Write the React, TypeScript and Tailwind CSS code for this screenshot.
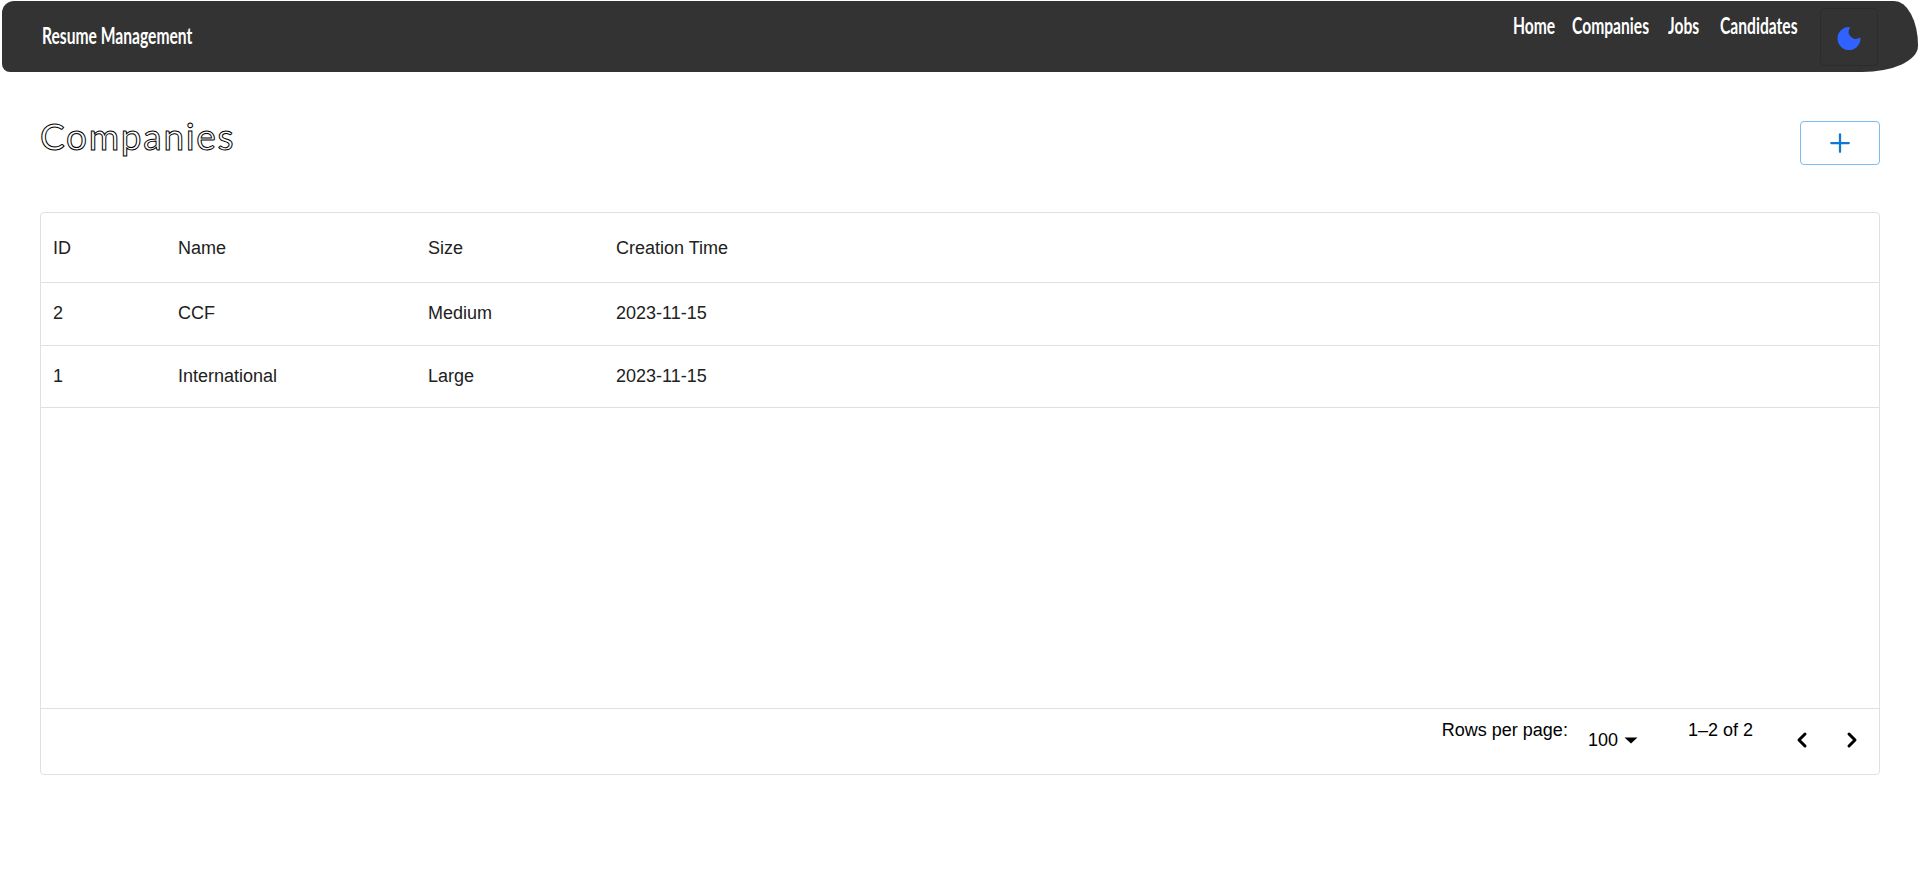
import { ChevronLeft, ChevronRight, Plus } from "lucide-react";

const rows = [
  { id: 2, name: "CCF", size: "Medium", created: "2023-11-15" },
  { id: 1, name: "International", size: "Large", created: "2023-11-15" },
];

const links = [
  { label: "Home", w: "w-[39px]" },
  { label: "Companies", w: "w-[76px]" },
  { label: "Jobs", w: "w-[32px]" },
  { label: "Candidates", w: "w-[80px]" },
];

function Cell({ w, children }: { w?: string; children: React.ReactNode }) {
  return <div className={`${w ?? "flex-1"} px-[12px] truncate`}>{children}</div>;
}

// no condensed font is installed, so the nav text is squeezed to the reference's width
function NavText({ w, children }: { w: string; children: React.ReactNode }) {
  return (
    <a className={`${w} block text-[22px] leading-[24px]`}>
      <span className="inline-block origin-left scale-x-[0.71] whitespace-nowrap">{children}</span>
    </a>
  );
}

export default function App() {
  return (
    <div className="h-[888px] w-full overflow-hidden bg-white font-['Liberation_Sans',sans-serif] text-black">
      <nav className="mt-px ml-[2px] flex h-[71px] justify-between bg-[#333333] pl-[40px] pr-[40px] rounded-tl-[12px] rounded-bl-[8px] rounded-tr-[24px_44px] rounded-br-[56px_26px] font-['Lato',sans-serif] font-bold text-white">
        <div className="mt-[23px]">
          <NavText w="w-[152px]">Resume Management</NavText>
        </div>
        <div className="flex items-start">
          <div className="mt-[13px] flex gap-[20px]">
            {links.map((l) => (
              <NavText key={l.label} w={l.w}>
                {l.label}
              </NavText>
            ))}
          </div>
          <button className="mt-[7px] ml-[20px] flex h-[58px] w-[58px] items-center justify-center rounded-[4px] border border-[#2c2c2c]">
            <svg width="24" height="24" viewBox="0 0 24 24" className="mt-px">
              <path
                fill="#2f62ff"
                d="M12 1a11.5 11.5 0 1 0 11.5 11.5c0-.6-.5-1-1-.8a7 7 0 0 1-9.7-9.6c.3-.5 0-1.1-.8-1.1z"
              />
            </svg>
          </button>
        </div>
      </nav>

      <main className="px-[40px]">
        <div className="mt-[27px] flex items-start justify-between">
          <h1 className="mt-[17px] text-[37px] leading-[40px] tracking-[1.7px] font-['Lato',sans-serif] text-white [-webkit-text-stroke:1px_#000000]">
            Companies
          </h1>
          <button className="mt-[22px] mr-[-2px] flex h-[44px] w-[80px] items-center justify-center rounded-[4px] border border-[#7dbcf0] text-[#0f76d2]">
            <Plus size={30} strokeWidth={1.8} />
          </button>
        </div>

        <div className="mt-[47px] mr-[-2px] flex h-[563px] flex-col rounded-[4px] border border-[#e0e0e0] text-[18px] text-[#212121]">
          <div className="flex h-[70px] shrink-0 items-center border-b border-[#e0e0e0] pt-px">
            <Cell w="w-[125px]">ID</Cell>
            <Cell w="w-[250px]">Name</Cell>
            <Cell w="w-[188px]">Size</Cell>
            <Cell>Creation Time</Cell>
          </div>
          {rows.map((r) => (
            <div key={r.id} className="flex h-[62.5px] shrink-0 items-center border-b border-[#e0e0e0]">
              <Cell w="w-[125px]">{r.id}</Cell>
              <Cell w="w-[250px]">{r.name}</Cell>
              <Cell w="w-[188px]">{r.size}</Cell>
              <Cell>{r.created}</Cell>
            </div>
          ))}
          <div className="flex-1" />
          <div className="flex h-[66px] shrink-0 items-start justify-end border-t border-[#e0e0e0] text-black">
            <span className="mt-[9px] leading-[24px]">Rows per page:</span>
            <div className="mt-[19px] ml-[20px] flex items-center leading-[24px]">
              100
              <svg width="24" height="24" viewBox="0 0 24 24" className="ml-[1px]">
                <path d="M5.5 9.5l6.5 6 6.5-6z" fill="#000" />
              </svg>
            </div>
            <span className="mt-[9px] ml-[45px] leading-[24px]">1–2 of 2</span>
            <div className="mt-[19px] ml-[37px] mr-[15px] flex gap-[26px]">
              <ChevronLeft size={24} strokeWidth={3} />
              <ChevronRight size={24} strokeWidth={3} />
            </div>
          </div>
        </div>
      </main>
    </div>
  );
}
